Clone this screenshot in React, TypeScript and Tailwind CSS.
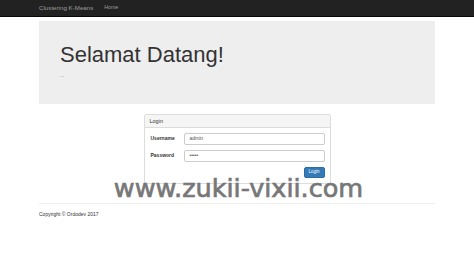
export default function App() {
  return (
    <div className="relative min-h-[266px] w-[474px] bg-white font-['Liberation_Sans',Arial,sans-serif] text-[#333]">
      <nav className="h-[17px] border-b border-[#080808] bg-[#222]">
        <div className="mx-auto flex h-full w-[396px] items-center">
          <span className="text-[6.2px] text-[#9d9d9d]">Clustering K-Means</span>
          <span className="ml-[11px] text-[5.2px] text-[#9d9d9d]">Home</span>
        </div>
      </nav>

      <div className="mx-auto w-[396px]">
        <div className="mt-[4px] h-[83px] bg-[#eee] pl-[21px] pt-[22px]">
          <h1 className="text-[22px] leading-[1.1] text-[#333]">Selamat Datang!</h1>
          <p className="mt-[6px] text-[5px] leading-none text-[#777]">...</p>
        </div>

        <div className="mx-auto mt-[10px] w-[187px] rounded-[2px] border border-[#ddd]">
          <div className="flex h-[13px] items-center border-b border-[#ddd] bg-[#f5f5f5] px-[5px] text-[5.5px] text-[#333]">
            Login
          </div>
          <div className="flex flex-col gap-[5px] px-[5px] pb-[5px] pt-[5px]">
            <div className="flex items-center">
              <label className="w-[34px] pl-[1px] text-[5px] font-bold text-[#333]">Username</label>
              <div className="flex h-[12px] flex-1 items-center rounded-[2px] border border-[#ccc] bg-white px-[5px] text-[5px] text-[#555]">
                admin
              </div>
            </div>
            <div className="flex items-center">
              <label className="w-[34px] pl-[1px] text-[5px] font-bold text-[#333]">Password</label>
              <div className="flex h-[12px] flex-1 items-center rounded-[2px] border border-[#ccc] bg-white px-[5px] text-[5px] text-[#555]">
                •••••
              </div>
            </div>
            <div className="flex justify-end">
              <button className="flex h-[11px] w-[21px] items-center justify-center rounded-[2px] border border-[#2e6da4] bg-[#337ab7] text-[4.5px] text-white">
                Login
              </button>
            </div>
          </div>
        </div>

        <hr className="mt-[19px] border-[#eee]" />
        <footer className="pt-[7px] text-[5px] text-[#333]">Copyright © Ordodev 2017</footer>
      </div>

      <div className="pointer-events-none absolute left-0 right-0 top-[176px] pl-[3px] text-center font-['DejaVu_Sans',Verdana,sans-serif] text-[25.5px] leading-none text-[#777] [-webkit-text-stroke:0.7px_#777]">
        www.zukii-vixii.com
      </div>
    </div>
  );
}
